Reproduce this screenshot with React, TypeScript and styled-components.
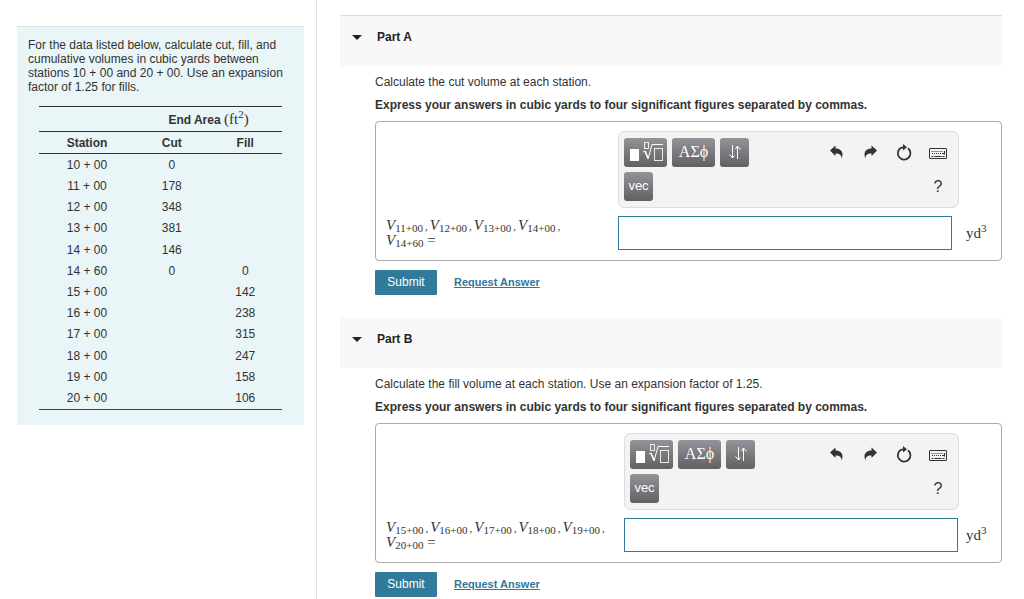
import React from "react";
import styled, { createGlobalStyle } from "styled-components";

const sans = `"Liberation Sans", Arial, Helvetica, sans-serif`;
const serif = `"Liberation Serif", "Times New Roman", serif`;

const GlobalStyle = createGlobalStyle`
  *, *::before, *::after { box-sizing: border-box; }
  body { margin: 0; background: #fff; color: #333; font: 12px/14px ${sans}; }
  p, h2 { margin: 0; }
`;

const Page = styled.div`
  display: flex;
  min-height: 100vh;
`;

const Sidebar = styled.aside`
  flex: 0 0 317px;
  padding: 26px 12px 0 17px;
  border-right: 1px solid #d5dfe7;
`;

const ProblemCard = styled.section`
  padding: 11px 11px 15px;
  background: #e9f5f7;
  border-top: 1px solid #d9e4e7;
`;

const ProblemText = styled.p`
  font-size: 12px;
`;

const DataTable = styled.table`
  width: 243px;
  height: 304px;
  margin: 12px 0 0 11px;
  border-collapse: collapse;
  border-bottom: 1px solid #444;
  font-size: 12px;
  text-align: center;

  thead tr { border-top: 1px solid #333; }
  thead { border-bottom: 1px solid #333; }
  th, td { padding: 0; }
`;

const GroupRow = styled.tr`
  height: 25px;
`;

const HeadRow = styled.tr`
  height: 22px;
`;

const StationHead = styled.th`
  width: 96px;
`;

const Unit = styled.span`
  font-family: ${serif};
  font-size: 15px;
  font-weight: normal;

  sup { font-size: 11px; line-height: 0; }
`;

const Main = styled.main`
  flex: 1;
  min-width: 0;
  padding: 15px 22px 0 23px;
`;

const PartSection = styled.section`
  margin-bottom: 23px;
`;

const PartHeader = styled.header<{ $ruled: boolean }>`
  display: flex;
  align-items: center;
  padding: 13px 12px 21px;
  background: #f8f8f8;
  border-top: ${(p) => (p.$ruled ? "1px solid #ddd" : "0")};
`;

const Toggle = styled.button`
  display: flex;
  align-items: center;
  gap: 15px;
  padding: 0;
  border: 0;
  background: none;
  color: #222;
  font: bold 12px/16px ${sans};
  cursor: pointer;
`;

const Caret = styled.span`
  border: 5px solid transparent;
  border-top-color: #222;
  border-bottom: 0;
`;

const PartBody = styled.div`
  display: grid;
  gap: 9px;
  padding: 9px 0 0 35px;
`;

const Prompt = styled.p`
  font-size: 12px;
`;

const Instruction = styled(Prompt)`
  font-weight: bold;
`;

const AnswerBox = styled.div<{ $labelWidth: number }>`
  display: grid;
  grid-template-columns: ${(p) => p.$labelWidth}px minmax(0, 1fr) 42px;
  row-gap: 8px;
  align-items: center;
  padding: 9px 0 10px 10px;
  border: 1px solid #aaa;
  border-radius: 4px;
`;

const Toolbar = styled.div`
  grid-column: 2;
  display: flex;
  justify-content: space-between;
  padding: 6px 3px 6px 5px;
  background: #f3f3f3;
  border: 1px solid #ddd;
  border-radius: 6px;
`;

const Palette = styled.div`
  display: flex;
  flex-wrap: wrap;
  gap: 5px;
  width: 130px;
`;

const PaletteButton = styled.button<{ $wide?: boolean; $serif?: boolean }>`
  display: flex;
  align-items: center;
  justify-content: center;
  width: ${(p) => (p.$wide ? 43 : 29)}px;
  height: 29px;
  padding: 0 0 2px;
  border: 0;
  border-radius: 3px;
  background: linear-gradient(#94939a, #616161);
  color: #fff;
  font: ${(p) => (p.$serif ? `16px/20px ${serif}` : `13px/20px ${sans}`)};
  cursor: pointer;
`;

const Tools = styled.div`
  display: grid;
  grid-template-columns: repeat(4, 34px);
  grid-auto-rows: 29px;
  row-gap: 5px;
`;

const ToolButton = styled.button<{ $last?: boolean }>`
  display: flex;
  align-items: center;
  justify-content: center;
  padding: 0;
  border: 0;
  background: none;
  color: #333;
  font: 16px/20px ${sans};
  cursor: pointer;
  ${(p) => p.$last && "grid-column: 4;"}
`;

const MathLabel = styled.label`
  grid-column: 1;
  font: 15px/15px ${serif};

  sub { font-size: 11px; line-height: 0; vertical-align: -2px; }
`;

const Term = styled.span`
  white-space: nowrap;
`;

const Separator = styled.span`
  margin: 0 2px;
  font-size: 11px;
  line-height: 0;
`;

const AnswerInput = styled.input`
  justify-self: start;
  width: 100%;
  max-width: 334px;
  height: 34px;
  padding: 0 8px;
  border: 1px solid #2f7c9f;
  background: #fff;
  font: 13px/16px ${sans};
`;

const AnswerUnit = styled(Unit)`
  padding-left: 7px;
`;

const Actions = styled.div`
  display: flex;
  align-items: center;
  gap: 17px;
`;

const SubmitButton = styled.button`
  width: 62px;
  height: 25px;
  padding: 0 0 1px;
  border: 0;
  border-radius: 1px;
  background: #317a99;
  color: #fff;
  font: 12px/16px ${sans};
  cursor: pointer;
`;

const RequestLink = styled.a`
  padding-bottom: 2px;
  color: #2f7899;
  font-size: 11px;
  font-weight: bold;
`;

const TemplateIcon = () => (
  <svg width="34" height="20" viewBox="0 0 34 20" fill="none" stroke="#fff" aria-hidden="true">
    <rect x="1" y="7" width="9" height="12" fill="#fff" stroke="none" />
    <rect x="15.5" y="0.5" width="4" height="6" strokeOpacity=".85" />
    <path d="M14 10l2-1 3 8 4-14.500h11" />
    <path d="M16 9l3 7" strokeWidth="1.500" />
    <rect x="25.500" y="6.500" width="8" height="12" strokeOpacity=".85" />
  </svg>
);

const ArrowsIcon = () => (
  <svg width="12" height="14" viewBox="0 0 12 14" fill="none" stroke="#fff" aria-hidden="true">
    <path d="M3.500 0v12.500M.5 9.500l3 3.500 2-2.500M8.500 14V1.500M6.500 4l2-3 3 3.500" />
  </svg>
);

const UndoIcon = ({ flip = false }: { flip?: boolean }) => (
  <svg width="13" height="16" viewBox="0 0 13 16" fill="currentColor" aria-hidden="true">
    <path
      transform={flip ? "matrix(-1 0 0 1 13 0)" : undefined}
      d="M0 5.500L5.500 0.500v3C10 3.500 12.500 6 12.500 9.500c0 1.500-.4 2.700-1 4 0-3.500-1.500-5-6-5v2.500z"
    />
  </svg>
);

const ResetIcon = () => (
  <svg width="16" height="17" viewBox="0 0 16 17" fill="none" stroke="currentColor" aria-hidden="true">
    <path d="M12 4.300A6.300 6.300 0 1 1 5 3.800L8 3.300" strokeWidth="1.800" />
    <path d="M7 0l4 3.300L7 6.600z" fill="currentColor" stroke="none" />
  </svg>
);

const KeyboardIcon = () => (
  <svg width="18" height="15" viewBox="0 0 18 15" fill="none" stroke="currentColor" aria-hidden="true">
    <rect x="0.500" y="3.500" width="17" height="10" rx="0.500" />
    <path d="M2.500 6.500h11M3 8.500h9" strokeDasharray="1 1" />
    <path d="M2.500 11.500h2M5.500 11.500h7M13.500 11.500h2M15.500 6v3.500M13 8.500h2" />
  </svg>
);

interface PartProps {
  id: string;
  title: string;
  prompt: string;
  stations: string[];
  labelWidth: number;
  ruled?: boolean;
}

function Part({ id, title, prompt, stations, labelWidth, ruled = false }: PartProps) {
  const last = stations.length - 1;
  return (
    <PartSection>
      <PartHeader $ruled={ruled}>
        <Toggle type="button" aria-expanded="true">
          <Caret />
          {title}
        </Toggle>
      </PartHeader>
      <PartBody>
        <Prompt>{prompt}</Prompt>
        <Instruction>
          Express your answers in cubic yards to four significant figures separated by commas.
        </Instruction>
        <AnswerBox $labelWidth={labelWidth}>
          <Toolbar role="toolbar" aria-label="Equation tools">
            <Palette>
              <PaletteButton type="button" $wide aria-label="Templates"><TemplateIcon /></PaletteButton>
              <PaletteButton type="button" $wide $serif>ΑΣϕ</PaletteButton>
              <PaletteButton type="button" aria-label="Arrows"><ArrowsIcon /></PaletteButton>
              <PaletteButton type="button">vec</PaletteButton>
            </Palette>
            <Tools>
              <ToolButton type="button" aria-label="Undo"><UndoIcon /></ToolButton>
              <ToolButton type="button" aria-label="Redo"><UndoIcon flip /></ToolButton>
              <ToolButton type="button" aria-label="Reset"><ResetIcon /></ToolButton>
              <ToolButton type="button" aria-label="Keyboard shortcuts"><KeyboardIcon /></ToolButton>
              <ToolButton type="button" $last>?</ToolButton>
            </Tools>
          </Toolbar>
          <MathLabel htmlFor={id}>
            {stations.map((station, i) => (
              <React.Fragment key={station}>
                {i === last && <br />}
                <Term>
                  <i>V</i>
                  <sub>{station}</sub>
                  {i === last ? " =" : <Separator>,</Separator>}
                </Term>
              </React.Fragment>
            ))}
          </MathLabel>
          <AnswerInput id={id} type="text" />
          <AnswerUnit>yd<sup>3</sup></AnswerUnit>
        </AnswerBox>
        <Actions>
          <SubmitButton type="button">Submit</SubmitButton>
          <RequestLink href="#">Request Answer</RequestLink>
        </Actions>
      </PartBody>
    </PartSection>
  );
}

const rows: [string, string, string][] = [
  ["10 + 00", "0", ""],
  ["11 + 00", "178", ""],
  ["12 + 00", "348", ""],
  ["13 + 00", "381", ""],
  ["14 + 00", "146", ""],
  ["14 + 60", "0", "0"],
  ["15 + 00", "", "142"],
  ["16 + 00", "", "238"],
  ["17 + 00", "", "315"],
  ["18 + 00", "", "247"],
  ["19 + 00", "", "158"],
  ["20 + 00", "", "106"],
];

export default function App() {
  return (
    <>
      <GlobalStyle />
      <Page>
        <Sidebar>
          <ProblemCard>
            <ProblemText>
              For the data listed below, calculate cut, fill, and cumulative volumes in cubic yards
              between stations 10 + 00 and 20 + 00. Use an expansion factor of 1.25 for fills.
            </ProblemText>
            <DataTable>
              <thead>
                <GroupRow>
                  <td />
                  <th colSpan={2}>
                    End Area <Unit>(ft<sup>2</sup>)</Unit>
                  </th>
                </GroupRow>
                <HeadRow>
                  <StationHead>Station</StationHead>
                  <th>Cut</th>
                  <th>Fill</th>
                </HeadRow>
              </thead>
              <tbody>
                {rows.map(([station, cut, fill]) => (
                  <tr key={station}>
                    <td>{station}</td>
                    <td>{cut}</td>
                    <td>{fill}</td>
                  </tr>
                ))}
              </tbody>
            </DataTable>
          </ProblemCard>
        </Sidebar>
        <Main>
          <Part
            id="part-a"
            title="Part A"
            prompt="Calculate the cut volume at each station."
            stations={["11+00", "12+00", "13+00", "14+00", "14+60"]}
            labelWidth={232}
            ruled
          />
          <Part
            id="part-b"
            title="Part B"
            prompt="Calculate the fill volume at each station. Use an expansion factor of 1.25."
            stations={["15+00", "16+00", "17+00", "18+00", "19+00", "20+00"]}
            labelWidth={238}
          />
        </Main>
      </Page>
    </>
  );
}
